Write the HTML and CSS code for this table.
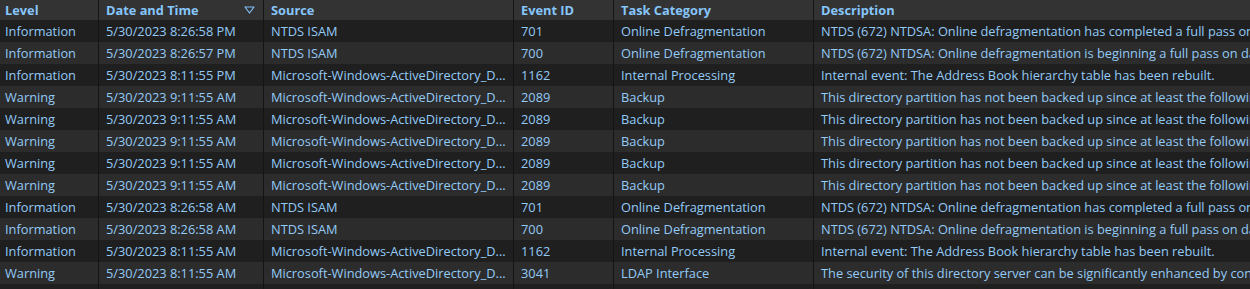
FILE: index.html
```html
<!DOCTYPE html>
<html lang="en">

<head>
    <meta charset="UTF-8">
    <title>Event Log</title>
    <link rel="stylesheet" href="styles.css">
</head>

<body>
    <div class="log">
        <div class="row head">
            <div class="cell c-level">Level</div>
            <div class="cell c-date">Date and Time
                <svg class="sort" width="11" height="8" viewBox="0 0 11 8"><path d="M1 1 H10 L5.5 7 Z" fill="none" stroke="#7fc0f7" stroke-width="1.2" stroke-linejoin="round"/></svg>
            </div>
            <div class="cell c-source">Source</div>
            <div class="cell c-id">Event ID</div>
            <div class="cell c-task">Task Category</div>
            <div class="cell c-desc">Description</div>
        </div>

        <div class="row">
            <div class="cell c-level">Information</div>
            <div class="cell c-date">5/30/2023 8:26:58 PM</div>
            <div class="cell c-source">NTDS ISAM</div>
            <div class="cell c-id">701</div>
            <div class="cell c-task">Online Defragmentation</div>
            <div class="cell c-desc">NTDS (672) NTDSA: Online defragmentation has completed a full pass on database 'C:\Windows\NTDS\ntds.dit'.</div>
        </div>
        <div class="row">
            <div class="cell c-level">Information</div>
            <div class="cell c-date">5/30/2023 8:26:57 PM</div>
            <div class="cell c-source">NTDS ISAM</div>
            <div class="cell c-id">700</div>
            <div class="cell c-task">Online Defragmentation</div>
            <div class="cell c-desc">NTDS (672) NTDSA: Online defragmentation is beginning a full pass on database 'C:\Windows\NTDS\ntds.dit'.</div>
        </div>
        <div class="row">
            <div class="cell c-level">Information</div>
            <div class="cell c-date">5/30/2023 8:11:55 PM</div>
            <div class="cell c-source">Microsoft-Windows-ActiveDirectory_D...</div>
            <div class="cell c-id">1162</div>
            <div class="cell c-task">Internal Processing</div>
            <div class="cell c-desc">Internal event: The Address Book hierarchy table has been rebuilt.</div>
        </div>
        <div class="row">
            <div class="cell c-level">Warning</div>
            <div class="cell c-date">5/30/2023 9:11:55 AM</div>
            <div class="cell c-source">Microsoft-Windows-ActiveDirectory_D...</div>
            <div class="cell c-id">2089</div>
            <div class="cell c-task">Backup</div>
            <div class="cell c-desc">This directory partition has not been backed up since at least the following number of days.</div>
        </div>
        <div class="row">
            <div class="cell c-level">Warning</div>
            <div class="cell c-date">5/30/2023 9:11:55 AM</div>
            <div class="cell c-source">Microsoft-Windows-ActiveDirectory_D...</div>
            <div class="cell c-id">2089</div>
            <div class="cell c-task">Backup</div>
            <div class="cell c-desc">This directory partition has not been backed up since at least the following number of days.</div>
        </div>
        <div class="row">
            <div class="cell c-level">Warning</div>
            <div class="cell c-date">5/30/2023 9:11:55 AM</div>
            <div class="cell c-source">Microsoft-Windows-ActiveDirectory_D...</div>
            <div class="cell c-id">2089</div>
            <div class="cell c-task">Backup</div>
            <div class="cell c-desc">This directory partition has not been backed up since at least the following number of days.</div>
        </div>
        <div class="row">
            <div class="cell c-level">Warning</div>
            <div class="cell c-date">5/30/2023 9:11:55 AM</div>
            <div class="cell c-source">Microsoft-Windows-ActiveDirectory_D...</div>
            <div class="cell c-id">2089</div>
            <div class="cell c-task">Backup</div>
            <div class="cell c-desc">This directory partition has not been backed up since at least the following number of days.</div>
        </div>
        <div class="row">
            <div class="cell c-level">Warning</div>
            <div class="cell c-date">5/30/2023 9:11:55 AM</div>
            <div class="cell c-source">Microsoft-Windows-ActiveDirectory_D...</div>
            <div class="cell c-id">2089</div>
            <div class="cell c-task">Backup</div>
            <div class="cell c-desc">This directory partition has not been backed up since at least the following number of days.</div>
        </div>
        <div class="row">
            <div class="cell c-level">Information</div>
            <div class="cell c-date">5/30/2023 8:26:58 AM</div>
            <div class="cell c-source">NTDS ISAM</div>
            <div class="cell c-id">701</div>
            <div class="cell c-task">Online Defragmentation</div>
            <div class="cell c-desc">NTDS (672) NTDSA: Online defragmentation has completed a full pass on database 'C:\Windows\NTDS\ntds.dit'.</div>
        </div>
        <div class="row">
            <div class="cell c-level">Information</div>
            <div class="cell c-date">5/30/2023 8:26:58 AM</div>
            <div class="cell c-source">NTDS ISAM</div>
            <div class="cell c-id">700</div>
            <div class="cell c-task">Online Defragmentation</div>
            <div class="cell c-desc">NTDS (672) NTDSA: Online defragmentation is beginning a full pass on database 'C:\Windows\NTDS\ntds.dit'.</div>
        </div>
        <div class="row">
            <div class="cell c-level">Information</div>
            <div class="cell c-date">5/30/2023 8:11:55 AM</div>
            <div class="cell c-source">Microsoft-Windows-ActiveDirectory_D...</div>
            <div class="cell c-id">1162</div>
            <div class="cell c-task">Internal Processing</div>
            <div class="cell c-desc">Internal event: The Address Book hierarchy table has been rebuilt.</div>
        </div>
        <div class="row">
            <div class="cell c-level">Warning</div>
            <div class="cell c-date">5/30/2023 8:11:55 AM</div>
            <div class="cell c-source">Microsoft-Windows-ActiveDirectory_D...</div>
            <div class="cell c-id">3041</div>
            <div class="cell c-task">LDAP Interface</div>
            <div class="cell c-desc">The security of this directory server can be significantly enhanced by configuring the server to reject SASL binds.</div>
        </div>
        <div class="row">
            <div class="cell c-level">Warning</div>
            <div class="cell c-date">5/30/2023 8:11:55 AM</div>
            <div class="cell c-source">Microsoft-Windows-ActiveDirectory_D...</div>
            <div class="cell c-id">1535</div>
            <div class="cell c-task">Backup</div>
            <div class="cell c-desc">The directory service has detected a change.</div>
        </div>
    </div>
</body>

</html>
```

FILE: styles.css
```css
body {
    margin: 0;
    background-color: #1e1e1e;
    font-family: 'Open Sans', 'Noto Sans', sans-serif;
    font-size: 12.8px;
    color: #93caf6;
    overflow: hidden;
}

.log {
    display: flex;
    flex-direction: column;
    width: 1250px;
    overflow: hidden;
}

.row {
    display: grid;
    grid-template-columns: 99px 165px 250px 100px 200px 1fr;
    height: 22px;
    background-color: #1f1f1f;
}

.row:nth-child(odd) {
    background-color: #2c2c2c;
}

.row.head {
    height: 20px;
    background-color: #333333;
    font-weight: bold;
    color: #86c6fb;
}

.cell {
    display: flex;
    align-items: center;
    padding-left: 7px;
    border-right: 1px solid #141414;
    white-space: nowrap;
    overflow: hidden;
}

.c-level {
    padding-left: 5px;
}

.c-desc {
    border-right: none;
}

.c-date {
    justify-content: space-between;
    padding-right: 8px;
}

.sort {
    flex: none;
}
```
